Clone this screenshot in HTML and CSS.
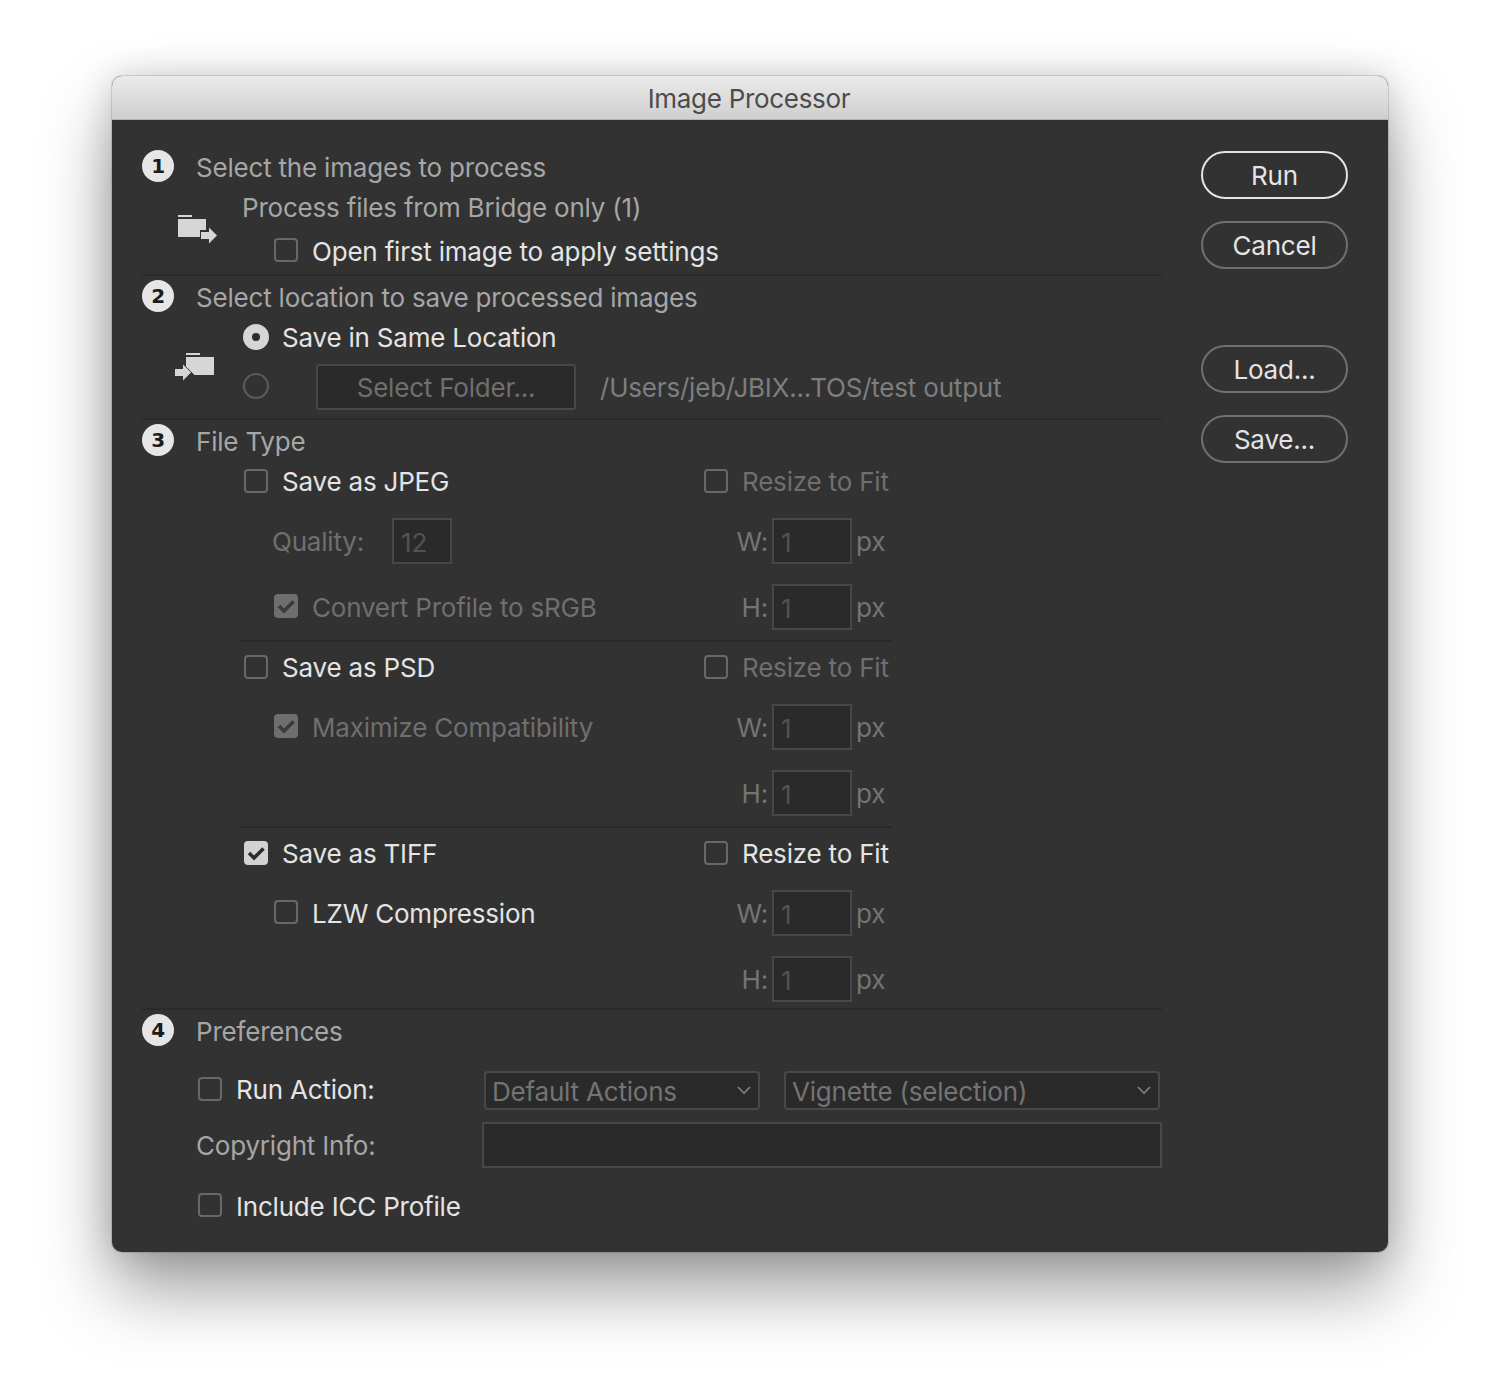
FILE: index.html
```html
<!DOCTYPE html>
<html lang="en">
<head>
    <meta charset="UTF-8">
    <meta name="viewport" content="width=device-width, initial-scale=1.0">
    <title>Image Processor</title>
    <link rel="stylesheet" href="styles.css">
</head>
<body>
    <div class="window">
        <div class="titlebar">Image Processor</div>
        <div class="content">
            <div class="panel">
                <section class="step step-one">
                    <div class="step-head"><span class="badge">1</span><span class="step-title">Select the images to process</span></div>
                    <div class="step-body">
                        <svg class="step-icon" width="40" height="30" viewBox="0 0 40 30">
                            <rect x="0" y="0" width="14" height="2" fill="#d6d6d6"/>
                            <path d="M0 4H28V15H22V22H0Z" fill="#d6d6d6"/>
                            <path d="M23 17H31V12.5L39 20.5L31 28.5V24H23Z" fill="#d6d6d6"/>
                        </svg>
                        <div class="step-rows">
                            <div class="line line-40 muted">Process files from Bridge only (1)</div>
                            <div class="line line-46 indent">
                                <span class="check"></span><span class="label">Open first image to apply settings</span>
                            </div>
                        </div>
                    </div>
                </section>

                <section class="step step-two">
                    <div class="step-head"><span class="badge">2</span><span class="step-title">Select location to save processed images</span></div>
                    <div class="step-body">
                        <svg class="step-icon" width="40" height="30" viewBox="0 0 40 30">
                            <rect x="11" y="0" width="14" height="2" fill="#d6d6d6"/>
                            <path d="M11 4H39V22H19.5L11 13.5Z" fill="#d6d6d6"/>
                            <path d="M0 16H8V11.5L16 19.5L8 27.5V23H0Z" fill="#d6d6d6"/>
                        </svg>
                        <div class="step-rows">
                            <div class="line line-40">
                                <span class="radio radio-on"></span><span class="label">Save in Same Location</span>
                            </div>
                            <div class="line line-46 folder-line">
                                <span class="radio"></span>
                                <span class="folder-btn">Select Folder...</span>
                                <span class="path">/Users/jeb/JBIX...TOS/test output</span>
                            </div>
                        </div>
                    </div>
                </section>

                <section class="step step-three">
                    <div class="step-head"><span class="badge">3</span><span class="step-title">File Type</span></div>

                    <div class="type-group type-first">
                        <div class="line line-40"><span class="check"></span><span class="label">Save as JPEG</span></div>
                        <div class="line line-40 resize"><span class="check"></span><span class="label dim">Resize to Fit</span></div>
                        <div class="line line-46 sub-quality"><span class="dim quality-label">Quality:</span><span class="box box-quality">12</span></div>
                        <div class="line line-46 size"><span class="size-label">W:</span><span class="box">1</span><span class="unit">px</span></div>
                        <div class="line line-46 indent"><span class="check check-dim"><svg width="24" height="24" viewBox="0 0 24 24"><path d="M5 12L10 17L19.5 7.5" class="tick tick-dim"/></svg></span><span class="label dim">Convert Profile to sRGB</span></div>
                        <div class="line line-46 size"><span class="size-label">H:</span><span class="box">1</span><span class="unit">px</span></div>
                    </div>

                    <div class="type-group">
                        <div class="line line-40"><span class="check"></span><span class="label">Save as PSD</span></div>
                        <div class="line line-40 resize"><span class="check"></span><span class="label dim">Resize to Fit</span></div>
                        <div class="line line-46 indent"><span class="check check-dim"><svg width="24" height="24" viewBox="0 0 24 24"><path d="M5 12L10 17L19.5 7.5" class="tick tick-dim"/></svg></span><span class="label dim">Maximize Compatibility</span></div>
                        <div class="line line-46 size"><span class="size-label">W:</span><span class="box">1</span><span class="unit">px</span></div>
                        <div class="line line-46"></div>
                        <div class="line line-46 size"><span class="size-label">H:</span><span class="box">1</span><span class="unit">px</span></div>
                    </div>

                    <div class="type-group type-last">
                        <div class="line line-40"><span class="check check-on"><svg width="24" height="24" viewBox="0 0 24 24"><path d="M5 12L10 17L19.5 7.5" class="tick"/></svg></span><span class="label">Save as TIFF</span></div>
                        <div class="line line-40 resize"><span class="check"></span><span class="label">Resize to Fit</span></div>
                        <div class="line line-46 indent"><span class="check"></span><span class="label">LZW Compression</span></div>
                        <div class="line line-46 size"><span class="size-label">W:</span><span class="box">1</span><span class="unit">px</span></div>
                        <div class="line line-46"></div>
                        <div class="line line-46 size"><span class="size-label">H:</span><span class="box">1</span><span class="unit">px</span></div>
                    </div>
                </section>

                <section class="step step-four">
                    <div class="step-head"><span class="badge">4</span><span class="step-title">Preferences</span></div>
                    <div class="pref-action">
                        <span class="check"></span><span class="label action-label">Run Action:</span>
                        <span class="select select-set"><span>Default Actions</span><svg width="14" height="10" viewBox="0 0 14 10"><path d="M1 2L7 8L13 2" class="chevron"/></svg></span>
                        <span class="select select-action"><span>Vignette (selection)</span><svg width="14" height="10" viewBox="0 0 14 10"><path d="M1 2L7 8L13 2" class="chevron"/></svg></span>
                    </div>
                    <div class="pref-copyright">
                        <span class="copyright-label">Copyright Info:</span>
                        <span class="box box-wide"></span>
                    </div>
                    <div class="pref-icc">
                        <span class="check"></span><span class="label">Include ICC Profile</span>
                    </div>
                </section>
            </div>

            <div class="actions">
                <button class="pill pill-default">Run</button>
                <button class="pill">Cancel</button>
                <button class="pill pill-load">Load...</button>
                <button class="pill">Save...</button>
            </div>
        </div>
    </div>
</body>
</html>
```

FILE: styles.css
```css
* {
    margin: 0;
    padding: 0;
    box-sizing: border-box;
}

html, body {
    height: 1400px;
    overflow: hidden;
}

body {
    font-family: Inter, "Noto Sans", sans-serif;
    font-size: 26px;
    letter-spacing: -0.2px;
    background-color: #fff;
    color: #e4e4e4;
    padding: 76px 112px 0;
}

.window {
    width: 1276px;
    height: 1176px;
    border-radius: 10px;
    background-color: #323232;
    box-shadow: 0 38px 70px rgba(0, 0, 0, 0.38), 0 0 36px rgba(0, 0, 0, 0.16), 0 0 0 1px rgba(0, 0, 0, 0.12);
}

.titlebar {
    height: 44px;
    line-height: 46px;
    text-align: center;
    padding-right: 2px;
    letter-spacing: -0.3px;
    color: #4c4c4c;
    border-radius: 10px 10px 0 0;
    border-bottom: 1px solid #b4b4b4;
    background: linear-gradient(#ebebeb, #cfcfcf);
}

.content {
    display: flex;
    padding: 0 40px 0 30px;
}

.panel {
    width: 1020px;
}

.step {
    border-bottom: 2px solid #2a2a2a;
}

.step-one {
    height: 156px;
    padding-top: 28px;
}

.step-two {
    height: 144px;
    padding-top: 2px;
}

.step-three {
    height: 590px;
    padding-top: 2px;
}

.step-four {
    border-bottom: none;
    padding-top: 2px;
}

.step-head {
    display: flex;
    align-items: center;
    height: 40px;
}

.badge {
    width: 32px;
    height: 32px;
    margin-top: -4px;
    margin-right: 22px;
    border-radius: 50%;
    background-color: #e6e6e6;
    color: #1c1c1c;
    font-family: "DejaVu Sans", sans-serif;
    font-size: 20px;
    font-weight: 700;
    line-height: 32px;
    text-align: center;
}

.step-title {
    padding-bottom: 2px;
    color: #a6a6a6;
}

.step-body {
    display: flex;
}

.step-one .step-icon {
    margin: 27px 24px 0 36px;
}

.step-two .step-icon {
    margin: 35px 27px 0 33px;
}

.step-rows {
    flex: 1;
}

.line {
    display: flex;
    align-items: center;
    white-space: nowrap;
}

.line-40 {
    height: 40px;
}

.line-46 {
    height: 46px;
}

.line-40 .label,
.muted {
    padding-bottom: 2px;
}

.muted {
    color: #a6a6a6;
}

.indent {
    padding-left: 32px;
}

.dim {
    color: #6f6f6f;
}

.label {
    margin-left: 14px;
}

.check {
    display: block;
    flex: none;
    width: 24px;
    height: 24px;
    margin-top: -3px;
    border: 2px solid #686868;
    border-radius: 4px;
}

.check svg {
    display: block;
}

.check-on {
    border: none;
    background-color: #d2d2d2;
}

.check-dim {
    border: none;
    background-color: #6e6e6e;
}

.tick {
    fill: none;
    stroke: #2c2c2c;
    stroke-width: 3.5;
}

.tick-dim {
    stroke: #3a3a3a;
}

.radio {
    display: block;
    flex: none;
    width: 26px;
    height: 26px;
    margin-left: 1px;
    margin-top: -3px;
    border: 2px solid #5c5c5c;
    border-radius: 50%;
}

.radio-on {
    border: 9px solid #d6d6d6;
    background-color: #2c2c2c;
}

.radio + .label {
    margin-left: 13px;
}

.folder-line {
    margin-top: 6px;
}

.folder-btn {
    width: 260px;
    height: 46px;
    margin-left: 47px;
    border: 2px solid #484848;
    border-radius: 3px;
    background-color: #2a2a2a;
    color: #6f6f6f;
    line-height: 44px;
    text-align: center;
}

.path {
    margin-left: 24px;
    color: #7e7e7e;
}

.type-group {
    display: grid;
    grid-template-columns: 464px 188px;
    grid-template-rows: 56px 66px 46px;
    width: 652px;
    height: 186px;
    margin-left: 98px;
    padding-top: 6px;
    border-bottom: 2px solid #2a2a2a;
}

.type-first {
    height: 180px;
    padding-top: 0;
}

.type-last {
    height: 174px;
    border-bottom: none;
}

.type-group .indent {
    padding-left: 34px;
}

.type-group .line:not(.indent):not(.resize) > .check {
    margin-left: 4px;
}

.sub-quality {
    padding-left: 32px;
}

.quality-label {
    width: 120px;
}

.size-label {
    width: 64px;
    text-align: right;
    color: #747474;
}

.box {
    display: block;
    width: 80px;
    height: 46px;
    margin-left: 4px;
    padding-left: 7px;
    border: 2px solid #484848;
    background-color: #2a2a2a;
    color: #525252;
    line-height: 46px;
}

.unit {
    margin-left: 4px;
    color: #747474;
}

.box-quality {
    width: 60px;
    margin-left: 0;
}

.step-four .check {
    margin-left: 56px;
}

.pref-action {
    display: flex;
    align-items: center;
    height: 40px;
    margin-top: 18px;
}

.action-label {
    width: 248px;
    padding-bottom: 2px;
}

.select {
    display: flex;
    justify-content: space-between;
    align-items: center;
    height: 39px;
    padding: 0 7px 0 6px;
    border: 2px solid #484848;
    border-radius: 4px;
    background-color: #2a2a2a;
    color: #747474;
}

.select span {
    padding-top: 2px;
}

.select-set {
    width: 276px;
    margin-right: 24px;
}

.select-action {
    width: 376px;
}

.chevron {
    fill: none;
    stroke: #808080;
    stroke-width: 1.6;
}

.pref-copyright {
    display: flex;
    align-items: center;
    margin-top: 12px;
    padding-left: 54px;
}

.copyright-label {
    width: 286px;
    color: #a6a6a6;
}

.box-wide {
    width: 680px;
    margin-left: 0;
}

.pref-icc {
    display: flex;
    align-items: center;
    height: 40px;
    margin-top: 18px;
}

.actions {
    display: flex;
    flex-direction: column;
    gap: 22px;
    width: 147px;
    margin-left: 39px;
    padding-top: 31px;
}

.pill {
    height: 48px;
    border: 2px solid #707070;
    border-radius: 24px;
    background: none;
    color: #e4e4e4;
    font-family: Inter, "Noto Sans", sans-serif;
    font-size: 26px;
    letter-spacing: -0.2px;
}

.pill-default {
    border-color: #e4e4e4;
}

.pill-load {
    margin-top: 54px;
}
```
